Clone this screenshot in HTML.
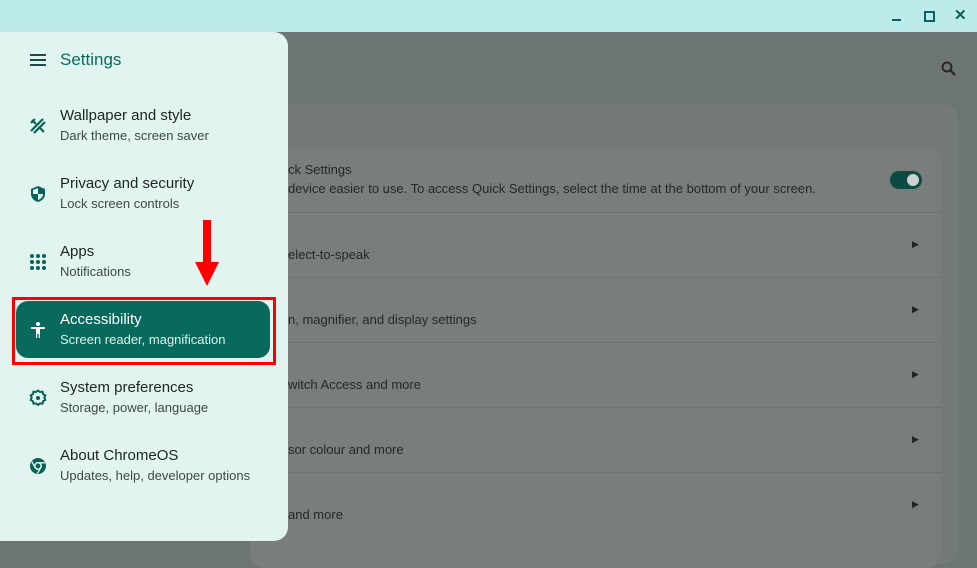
<!DOCTYPE html><html><head><style>
body{margin:0;width:977px;height:541px;overflow:hidden;background:#6c7573;font-family:"Liberation Sans",sans-serif;position:relative}
.tb{position:absolute;left:0;top:0;width:977px;height:32px;background:#bdeaea}
.card1{position:absolute;left:250px;top:104px;width:708px;height:460px;background:#737a78;border-radius:16px}
.card2{position:absolute;left:250px;top:148px;width:691px;height:420px;background:#797e7c;border-radius:14px}
.row{position:absolute;left:250px;width:691px;border-top:1px solid #6e7472;height:64px}
.t{position:absolute;font-size:13px;color:#22272a}
.chev{position:absolute;left:912px;font-size:9px;color:#222}
.drawer{position:absolute;left:0;top:32px;width:288px;height:509px;background:#e2f4ef;border-radius:0 14px 14px 0}
.item{position:absolute;left:0;width:288px;height:60px}
.item .a{position:absolute;left:60px;top:8px;font-size:15px;color:#1c2524}
.item .b{position:absolute;left:60px;top:29px;font-size:13px;color:#3f4947}
.item svg{position:absolute;left:29px;top:18px}
</style></head><body>
<div class="tb"></div>
<div style="position:absolute;left:892px;top:19px;width:9px;height:2px;background:#06645a"></div>
<div style="position:absolute;left:924px;top:11px;width:7px;height:7px;border:2px solid #06645a"></div>
<div style="position:absolute;left:954px;top:6px;font-size:15px;font-weight:bold;color:#06645a">✕</div>
<svg style="position:absolute;left:940px;top:60px" width="18" height="18" viewBox="0 0 18 18"><circle cx="7" cy="7" r="4.5" fill="none" stroke="#222" stroke-width="1.8"/><path d="M10.5 10.5L15 15" stroke="#222" stroke-width="2"/></svg>
<div class="card1"></div><div class="card2"></div>
<div class="t" style="left:288px;top:162px">ck Settings</div>
<div class="t" style="left:288px;top:181px">device easier to use. To access Quick Settings, select the time at the bottom of your screen.</div>
<div style="position:absolute;left:890px;top:171px;width:32px;height:18px;border-radius:9px;background:#0c4a42"></div>
<div style="position:absolute;left:907px;top:174px;width:12px;height:12px;border-radius:6px;background:#c9d4d1"></div>
<div class="row" style="top:212px"></div><div class="t" style="left:288px;top:247px">elect-to-speak</div><div class="chev" style="top:239px">▶</div>
<div class="row" style="top:277px"></div><div class="t" style="left:288px;top:312px">n, magnifier, and display settings</div><div class="chev" style="top:304px">▶</div>
<div class="row" style="top:342px"></div><div class="t" style="left:288px;top:377px">witch Access and more</div><div class="chev" style="top:369px">▶</div>
<div class="row" style="top:407px"></div><div class="t" style="left:288px;top:442px">sor colour and more</div><div class="chev" style="top:434px">▶</div>
<div class="row" style="top:472px"></div><div class="t" style="left:288px;top:507px">and more</div><div class="chev" style="top:499px">▶</div>
<div class="drawer"></div>
<svg style="position:absolute;left:29px;top:53px" width="18" height="14"><path d="M1 2h16M1 7h16M1 12h16" stroke="#1c4a44" stroke-width="2"/></svg>
<div style="position:absolute;left:60px;top:50px;font-size:17px;color:#0a6b5e">Settings</div>
<div class="item" style="top:99px"><svg width="18" height="18" viewBox="0 0 18 18"><path d="M2 14L14 2M5 16l11-11M3 3l4 4M11 11l4 4M2 6l4-4" stroke="#0a6157" stroke-width="2.2" fill="none"/></svg><div class="a">Wallpaper and style</div><div class="b">Dark theme, screen saver</div></div>
<div class="item" style="top:167px"><svg width="18" height="18" viewBox="0 0 18 18"><path d="M9 1L2 4v5c0 4 3 7 7 8 4-1 7-4 7-8V4z" fill="#0a6157"/><path d="M9 3v6H4V5z M9 9h5c0 3-2 5-5 6z" fill="#e2f4ef"/></svg><div class="a">Privacy and security</div><div class="b">Lock screen controls</div></div>
<div class="item" style="top:235px"><svg width="18" height="18" viewBox="0 0 18 18" fill="#0a6157"><circle cx="3" cy="3" r="2"/><circle cx="9" cy="3" r="2"/><circle cx="15" cy="3" r="2"/><circle cx="3" cy="9" r="2"/><circle cx="9" cy="9" r="2"/><circle cx="15" cy="9" r="2"/><circle cx="3" cy="15" r="2"/><circle cx="9" cy="15" r="2"/><circle cx="15" cy="15" r="2"/></svg><div class="a">Apps</div><div class="b">Notifications</div></div>
<div style="position:absolute;left:12px;top:297px;width:258px;height:62px;border:3px solid #f00"></div>
<div style="position:absolute;left:16px;top:301px;width:254px;height:57px;background:#076a5c;border-radius:12px"></div>
<div class="item" style="top:303px"><svg width="18" height="18" viewBox="0 0 18 18" fill="#fff"><circle cx="9" cy="3" r="2"/><path d="M2 6h14v2h-5v9H9.8v-4H8.2v4H7V8H2z"/></svg><div class="a" style="color:#fff">Accessibility</div><div class="b" style="color:#dfeeea">Screen reader, magnification</div></div>
<div class="item" style="top:371px"><svg width="18" height="18" viewBox="0 0 18 18"><path d="M9 1.5l2 1.5 2.5-.3.6 2.4 2.2 1.3-1 2.3 1 2.3-2.2 1.3-.6 2.4-2.5-.3-2 1.5-2-1.5-2.5.3-.6-2.4-2.2-1.3 1-2.3-1-2.3 2.2-1.3.6-2.4 2.5.3z" fill="none" stroke="#0a6157" stroke-width="2"/><circle cx="9" cy="9" r="2" fill="#0a6157"/></svg><div class="a">System preferences</div><div class="b">Storage, power, language</div></div>
<div class="item" style="top:439px"><svg width="18" height="18" viewBox="0 0 18 18"><circle cx="9" cy="9" r="8" fill="#0a6157"/><circle cx="9" cy="9" r="3.2" fill="none" stroke="#e2f4ef" stroke-width="1.5"/><path d="M9 5.8h7M6.2 10.6L2.8 4.6M11.8 10.6L8.3 16.6" stroke="#e2f4ef" stroke-width="1.3"/></svg><div class="a">About ChromeOS</div><div class="b">Updates, help, developer options</div></div>
<div style="position:absolute;left:203px;top:220px;width:8px;height:45px;background:#f00"></div>
<div style="position:absolute;left:195px;top:262px;width:0;height:0;border-left:12px solid transparent;border-right:12px solid transparent;border-top:24px solid #f00"></div>
</body></html>
